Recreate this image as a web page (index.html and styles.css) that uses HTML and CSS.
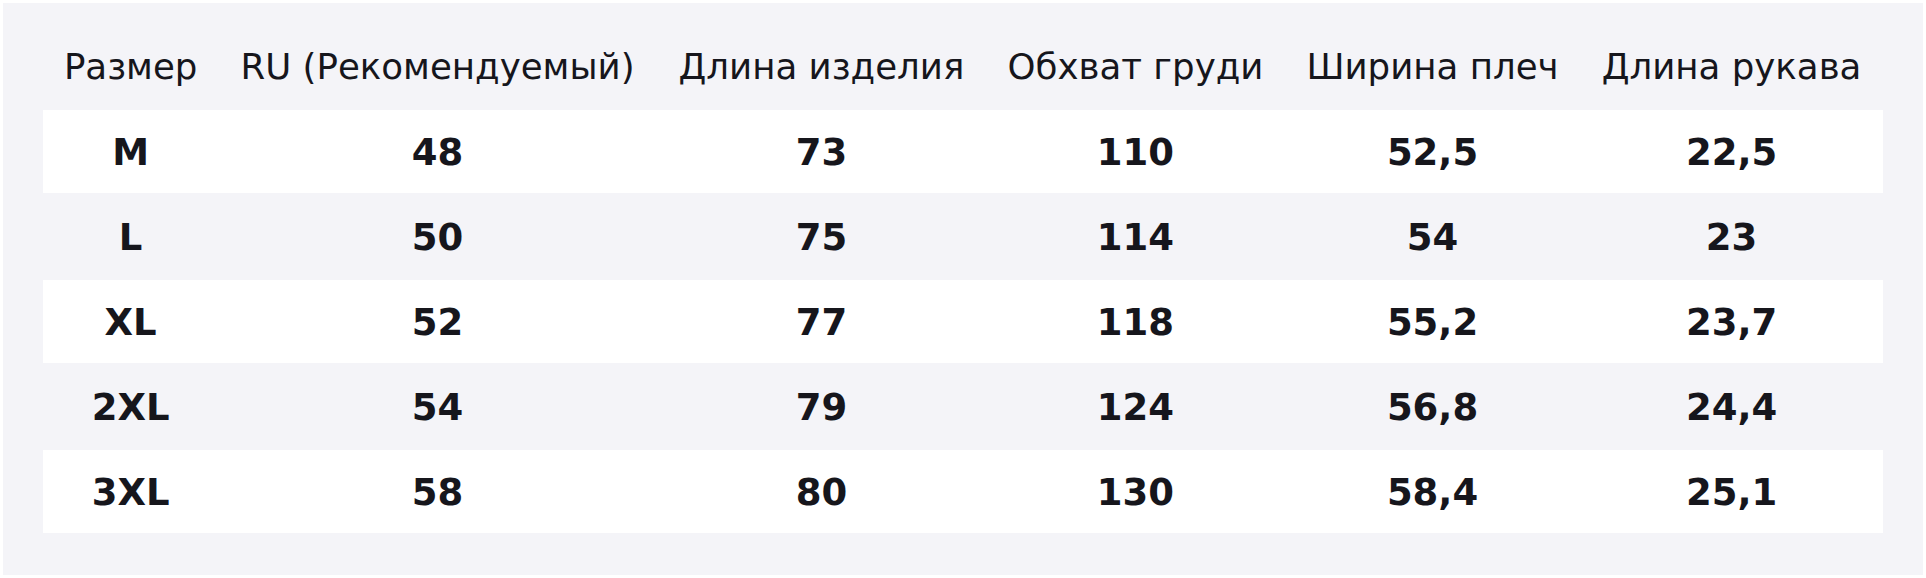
FILE: index.html
```html
<!DOCTYPE html>
<html lang="ru">
<head>
<meta charset="utf-8">
<title>Таблица размеров</title>
<link rel="stylesheet" href="styles.css">
</head>
<body>
<div class="wrap">
  <table class="sizes">
    <thead>
      <tr>
        <th>Размер</th>
        <th>RU (Рекомендуемый)</th>
        <th>Длина изделия</th>
        <th>Обхват груди</th>
        <th>Ширина плеч</th>
        <th>Длина рукава</th>
      </tr>
    </thead>
    <tbody>
      <tr><td>M</td><td>48</td><td>73</td><td>110</td><td>52,5</td><td>22,5</td></tr>
      <tr><td>L</td><td>50</td><td>75</td><td>114</td><td>54</td><td>23</td></tr>
      <tr><td>XL</td><td>52</td><td>77</td><td>118</td><td>55,2</td><td>23,7</td></tr>
      <tr><td>2XL</td><td>54</td><td>79</td><td>124</td><td>56,8</td><td>24,4</td></tr>
      <tr><td>3XL</td><td>58</td><td>80</td><td>130</td><td>58,4</td><td>25,1</td></tr>
    </tbody>
  </table>
</div>
</body>
</html>
```
FILE: styles.css
```css
html, body {
  margin: 0;
  padding: 0;
  background: #ffffff;
}
body {
  padding: 3px;
  font-family: "DejaVu Sans", "Noto Sans", sans-serif;
  color: #16161c;
}
.wrap {
  background: #f4f4f8;
  padding: 22px 40px 40px;
}
.sizes {
  width: 100%;
  border-collapse: separate;
  border-spacing: 0 2px;
}
.sizes th {
  font-size: 35.6px;
  font-weight: normal;
  line-height: 41px;
  padding: 19px 20px 21px;
  text-align: center;
  white-space: nowrap;
}
.sizes td {
  font-size: 37px;
  font-weight: bold;
  line-height: 41px;
  padding: 22px 20px 20px;
  text-align: center;
  white-space: nowrap;
}
.sizes tbody tr:nth-child(odd) td {
  background: #ffffff;
}
```
